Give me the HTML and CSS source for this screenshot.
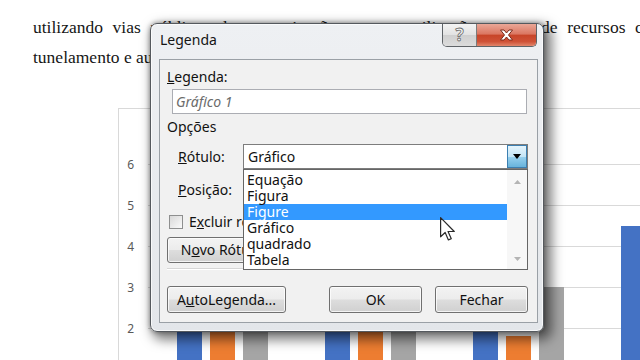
FILE: index.html
```html
<!DOCTYPE html>
<html lang="pt">
<head>
<meta charset="utf-8">
<title>Legenda</title>
<link rel="stylesheet" href="styles.css">
</head>
<body>
<div class="doc">
  <div class="line1">utilizando vias públicas de comunicação, com a utilização segura de recursos como</div>
  <div class="line2">tunelamento e autenticação dos usuários.</div>
  <div class="chart">
    <div class="axis"><span>6</span><span>5</span><span>4</span><span>3</span><span>2</span></div>
    <div class="plot">
      <div class="cat"><i class="bar b" style="height:176.3px"></i><i class="bar o" style="height:98.4px"></i><i class="bar g" style="height:82px"></i></div>
      <div class="cat"><i class="bar b" style="height:102.5px"></i><i class="bar o" style="height:180.4px"></i><i class="bar g" style="height:82px"></i></div>
      <div class="cat"><i class="bar b" style="height:143.5px"></i><i class="bar o" style="height:73.8px"></i><i class="bar g" style="height:123px"></i></div>
      <div class="cat"><i class="bar b" style="height:184.5px"></i><i class="bar o" style="height:114.8px"></i><i class="bar g" style="height:205px"></i></div>
    </div>
  </div>
</div>

<div class="dlg">
  <div class="titlebar">
    <div class="title">Legenda</div>
    <div class="caps">
      <div class="help">?</div>
      <div class="close"><svg width="15" height="12" viewBox="0 0 15 12"><path d="M1.5 1h3.5l2.5 3 2.5-3h3.5l-4 5 4 5h-3.5l-2.5-3-2.5 3h-3.5l4-5z" fill="#fff" stroke="#7a2c1c" stroke-width="1" stroke-linejoin="round"/></svg></div>
    </div>
  </div>
  <div class="client">
    <div class="lbl"><u>L</u>egenda:</div>
    <div class="input">Gráfico 1</div>
    <div class="group">Opções</div>
    <div class="row"><span class="rl"><u>R</u>ótulo:</span><div class="combo"><span>Gráfico</span><span class="ddbtn"><svg width="8" height="5" viewBox="0 0 8 5"><path d="M0 0h8L4 5z" fill="#000"/></svg></span></div></div>
    <div class="row"><span class="rl"><u>P</u>osição:</span><div class="combo"><span>Acima do item selecionado</span></div></div>
    <div class="check-row"><span class="cb"></span><span>E<u>x</u>cluir rótulo da legenda</span></div>
    <div class="btn newbtn">N<u>o</u>vo Rótulo...</div>
    <div class="sep"></div>
    <div class="btns">
      <div class="btn auto">A<u>u</u>toLegenda...</div>
      <div class="btn ok">OK</div>
      <div class="btn close-btn">Fechar</div>
    </div>
    <div class="list">
      <div class="items">
        <div class="item">Equação</div>
        <div class="item">Figura</div>
        <div class="item sel">Figure</div>
        <div class="item">Gráfico</div>
        <div class="item">quadrado</div>
        <div class="item">Tabela</div>
      </div>
      <div class="sb">
        <svg width="7" height="4" viewBox="0 0 7 4"><path d="M0 4L3.5 0 7 4z" fill="#b4b4b4"/></svg>
        <svg width="7" height="4" viewBox="0 0 7 4"><path d="M0 0h7L3.5 4z" fill="#b4b4b4"/></svg>
      </div>
    </div>
  </div>
</div>

<svg class="cursor" width="15" height="24" viewBox="0 0 12.5 20"><path d="M.5.5v16l3.8-3.6 2.7 6.2 2.4-1-2.7-6h5.2z" fill="#fff" stroke="#2a2a2a" stroke-width="1" stroke-linejoin="round"/></svg>
</body>
</html>
```

FILE: styles.css
```css
* { box-sizing: border-box; }
html, body {
  margin: 0;
  width: 640px;
  height: 360px;
  overflow: hidden;
  background: #fff;
}
body {
  position: relative;
  font-family: "Noto Sans", "Open Sans", sans-serif;
}

/* document */
.doc {
  padding: 12px 0 0 33px;
  font-family: "Liberation Serif", "Times New Roman", serif;
  font-size: 17.5px;
  line-height: 30px;
  color: #161616;
}
.line1 {
  width: 641px;
  text-align: justify;
  text-align-last: justify;
}
.line2 { white-space: nowrap; }

.chart {
  margin: 36px 0 0 85px;
  width: 640px;
  height: 400px;
  border-top: 1px solid #d9d9d9;
  border-left: 1px solid #d9d9d9;
  padding-top: 55px;
  display: grid;
  grid-template-columns: 29px 592px;
  align-items: start;
}
.axis {
  display: flex;
  flex-direction: column;
  margin-top: -20.5px;
  padding-right: 14px;
  text-align: right;
  font: 12px "Noto Sans", sans-serif;
  color: #595959;
}
.axis span { height: 41px; line-height: 41px; }
.plot {
  height: 246px;
  background: repeating-linear-gradient(to bottom, #d9d9d9 0 1px, transparent 1px 41px);
  display: grid;
  grid-template-columns: repeat(4, 148px);
}
.cat {
  display: flex;
  justify-content: center;
  align-items: flex-end;
  gap: 8px;
  height: 246px;
}
.bar { display: block; width: 25px; }
.b { background: #4472c4; }
.o { background: #ed7d31; }
.g { background: #a5a5a5; }

/* dialog */
.dlg {
  position: absolute;
  left: 150px;
  top: 23px;
  width: 394px;
  height: 309px;
  border: 1px solid #55595e;
  border-radius: 7px;
  background: linear-gradient(#eef0f3, #e3e6ea);
  box-shadow: 0 0 5px rgba(0,0,0,.4), 5px 5px 12px 3px rgba(0,0,0,.5), inset 0 0 0 1px rgba(255,255,255,.7);
  padding: 0 5px 8px 8px;
  display: flex;
  flex-direction: column;
  color: #111;
  font-size: 14px;
}
.titlebar {
  height: 35px;
  flex: none;
  display: flex;
  justify-content: space-between;
  align-items: flex-start;
}
.title {
  font-size: 14px;
  line-height: 31px;
  padding-left: 1px;
  color: #141414;
}
.caps {
  display: flex;
  height: 23px;
  margin-right: 1px;
  border: 1px solid #5f6367;
  border-top: 0;
  border-radius: 0 0 5px 5px;
  overflow: hidden;
}
.help {
  width: 34px;
  border-right: 1px solid #7b7b7b;
  background: linear-gradient(#f3f3f3, #e2e2e2 50%, #cfcfcf 51%, #dcdcdc);
  text-align: center;
  font: bold 17px/22px "Noto Sans", sans-serif;
  color: #f6f6f6;
  -webkit-text-stroke: .8px #6a6a6a;
}
.close {
  width: 59px;
  background: linear-gradient(#eaa797 0%, #db7762 45%, #c84529 52%, #cf5237 80%, #e2866c 100%);
  display: flex;
  align-items: center;
  justify-content: center;
}

.client {
  flex: 1;
  position: relative;
  border: 1px solid #9aa0a6;
  background: #f1f1f1;
  padding: 8px 0 0 7px;
  font-size: 14px;
  line-height: 18px;
}
.input {
  margin: 3px 0 0 5px;
  width: 355px;
  height: 25px;
  border: 1px solid #abadb3;
  background: #fff;
  padding-left: 3px;
  line-height: 23px;
  font-style: italic;
  color: #6b6b6b;
}
.group { margin-top: 4px; }
.row {
  display: flex;
  align-items: center;
  height: 25px;
  margin-top: 8px;
}
.rl { width: 76px; padding-left: 11px; }
.combo {
  width: 285px;
  height: 25px;
  border: 1px solid #7d7d7d;
  background: #fff;
  display: flex;
  justify-content: space-between;
  padding-left: 4px;
  line-height: 23px;
}
.ddbtn {
  width: 20px;
  height: 23px;
  border: 1px solid #3c7fb1;
  background: linear-gradient(#e5f4fc, #c4e5f6 50%, #98d1ef 51%, #68b3db);
  display: flex;
  align-items: center;
  justify-content: center;
}
.check-row {
  display: flex;
  align-items: center;
  gap: 6px;
  height: 18px;
  margin-top: 11px;
  padding-left: 2px;
}
.cb {
  width: 14px;
  height: 14px;
  border: 1px solid #8e8f8f;
  background: linear-gradient(135deg, #d8d8d8, #fafafa);
}
.btn {
  height: 27px;
  border: 1px solid #707070;
  border-radius: 3px;
  background: linear-gradient(#f3f3f3 0%, #ececec 48%, #dddddd 52%, #d0d0d0 100%);
  box-shadow: inset 0 0 0 1px rgba(255,255,255,.75);
  text-align: center;
  line-height: 25px;
  white-space: nowrap;
}
.newbtn { width: 120px; height: 26px; line-height: 24px; margin-top: 6px; }
.sep {
  margin: 5px 9px 0 0;
  border-top: 1px solid #d6d6d6;
  border-bottom: 1px solid #fff;
}
.btns {
  display: flex;
  margin-top: 16px;
  margin-right: 9px;
}
.auto { width: 119px; }
.ok { width: 93px; margin-left: auto; }
.close-btn { width: 93px; margin-left: 13px; }

.list {
  position: absolute;
  left: 83px;
  top: 109px;
  width: 285px;
  height: 101px;
  border: 1px solid #666;
  background: #fff;
  display: flex;
}
.items { flex: 1; padding-top: 2px; }
.item {
  height: 16px;
  line-height: 16px;
  padding-left: 3px;
  white-space: nowrap;
}
.item.sel { background: #3399ff; color: #fff; }
.sb {
  width: 20px;
  background: #f7f7f7;
  display: flex;
  flex-direction: column;
  justify-content: space-between;
  align-items: center;
  padding: 10px 0 8px;
}

.cursor {
  position: absolute;
  left: 440px;
  top: 217px;
}
```
